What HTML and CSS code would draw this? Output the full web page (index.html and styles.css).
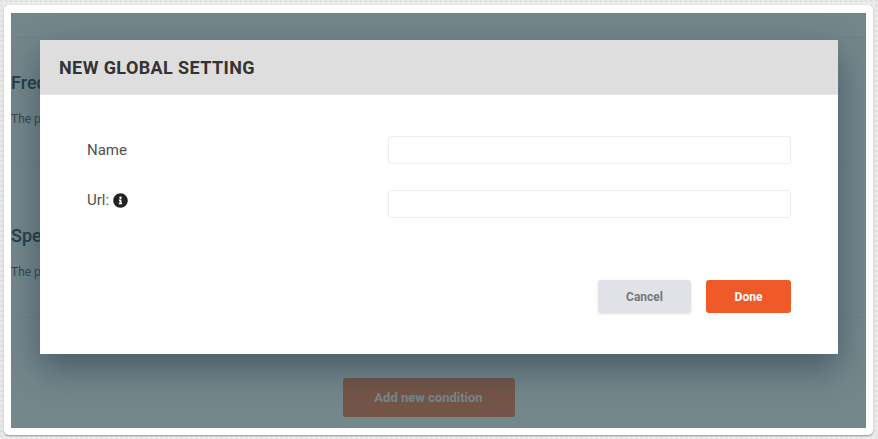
FILE: index.html
```html
<!DOCTYPE html>
<html lang="en">
<head>
<meta charset="utf-8">
<title>New global setting</title>
<link rel="stylesheet" href="styles.css">
</head>
<body>
<div class="card">
  <div class="stage">
    <div class="page">
      <section class="cond cond-first">
        <h3>Frequency</h3>
        <p>The pop-up will be shown</p>
      </section>
      <section class="cond">
        <h3>Specific pages</h3>
        <p>The pop-up will be shown</p>
      </section>
      <div class="add-row"><button class="add" type="button">Add new condition</button></div>
    </div>
    <div class="scrim"></div>
    <div class="modal">
      <header class="modal-head"><h2>NEW GLOBAL SETTING</h2></header>
      <div class="modal-body">
        <div class="row">
          <label class="lbl">Name</label>
          <input class="field" type="text">
        </div>
        <div class="row row-url">
          <div class="lbl"><label>Url:</label>
            <svg class="info" viewBox="0 0 512 512" width="15" height="15"><path d="M256 8C119 8 8 119 8 256s111 248 248 248 248-111 248-248S393 8 256 8zm0 110c23 0 42 19 42 42s-19 42-42 42-42-19-42-42 19-42 42-42zm56 254c0 7-5 12-12 12h-88c-7 0-12-5-12-12v-24c0-7 5-12 12-12h12v-64h-12c-7 0-12-5-12-12v-24c0-7 5-12 12-12h64c7 0 12 5 12 12v100h12c7 0 12 5 12 12v24z"/></svg>
          </div>
          <input class="field" type="text">
        </div>
        <div class="actions">
          <button class="btn btn-cancel" type="button">Cancel</button>
          <button class="btn btn-done" type="button">Done</button>
        </div>
      </div>
    </div>
  </div>
</div>
</body>
</html>
```

FILE: styles.css
```css
* { box-sizing: border-box; }
html, body { height: 100%; }
body {
  margin: 0;
  padding: 5px 5px 4px 4px;
  overflow: hidden;
  font-family: Roboto, "Liberation Sans", sans-serif;
  background-color: #e9e9e9;
  background-image:
    radial-gradient(circle at 1px 1px, #dcdcdc 0.6px, transparent 1px),
    radial-gradient(circle at 4px 3px, #f3f3f3 0.6px, transparent 1px);
  background-size: 5px 5px;
}
.card {
  height: 430px;
  padding: 8px 7px 7px 7px;
  background: #fff;
  border-radius: 5px;
  box-shadow: 0 1px 2px rgba(0, 0, 0, 0.35);
}
.stage {
  position: relative;
  height: 415px;
  overflow: hidden;
  background: #fff;
}
.page { height: 100%; padding-top: 24px; }
.cond {
  height: 154px;
  padding-top: 61px;
  border-bottom: 1px solid #f4f4f4;
}
.cond-first { height: 127px; padding-top: 34px; border-top: 1px solid #f4f4f4; }
.cond h3 {
  margin: 0;
  font-size: 18px;
  line-height: 22px;
  font-weight: 500;
  color: #1f3d4d;
}
.cond p {
  margin: 18px 0 0;
  font-size: 12px;
  line-height: 14px;
  color: #4a5a62;
}
.add-row { display: flex; justify-content: center; padding-top: 60px; padding-right: 20px; }
.add {
  width: 172px;
  height: 39px;
  border: 0;
  border-radius: 3px;
  background: #ff7c4e;
  color: #fff;
  font: 700 13px Roboto, sans-serif;
}
.scrim {
  position: absolute;
  inset: 0;
  background: rgba(30, 62, 68, 0.62);
}
.modal {
  position: absolute;
  left: 29px;
  top: 27px;
  width: 798px;
  height: 314px;
  background: #fff;
  box-shadow: 0 14px 34px rgba(40, 60, 75, 0.6);
}
.modal-head {
  height: 55px;
  padding: 0 19px;
  display: flex;
  align-items: center;
  background: #dedede;
  border-bottom: 1px solid #e8e8e8;
}
.modal-head h2 {
  margin: 0;
  font-size: 18px;
  font-weight: 700;
  letter-spacing: 0.4px;
  color: #333;
}
.modal-body { padding: 41px 47px 0; }
.row {
  display: flex;
  align-items: center;
  justify-content: space-between;
  height: 28px;
}
.row-url { margin-top: 26px; }
.lbl {
  font-size: 15px;
  color: #505050;
  display: flex;
  align-items: center;
  gap: 4px;
}
.row-url .lbl { position: relative; top: -4px; }
.info { fill: #222; display: block; }
.field {
  width: 403px;
  height: 28px;
  padding: 0 8px;
  background: #fff;
  border: 1px solid #ececec;
  border-radius: 3px;
}
.actions {
  display: flex;
  justify-content: flex-end;
  gap: 15px;
  margin-top: 62px;
}
.btn {
  height: 33px;
  border: 0;
  border-radius: 3px;
  font: 700 12px Roboto, sans-serif;
}
.btn-cancel {
  width: 93px;
  background: #e1e2e7;
  color: #75777c;
  box-shadow: 0 1px 3px rgba(0, 0, 0, 0.12);
}
.btn-done {
  width: 85px;
  background: #f05a28;
  color: #fff;
}
```
